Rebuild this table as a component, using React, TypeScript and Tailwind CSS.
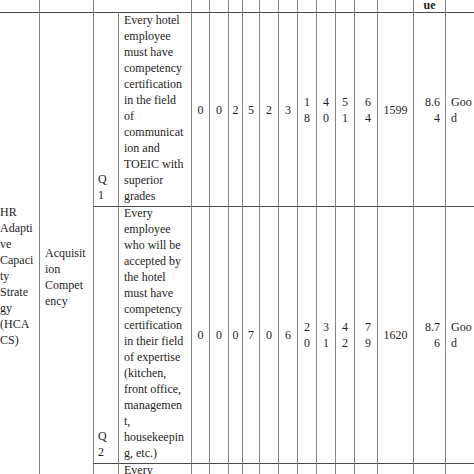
const COLS =
  "grid-cols-[59px_54px_25px_73px_18px_19px_14px_17px_19px_19px_19px_19px_19px_23px_36px_32px_60px]";

const cell = "border-l border-t border-l-[#858585] border-t-[#4a4a4a] bg-white";

type Row = {
  label: string;
  text: string[];
  shift: string;
  scores: string[];
  total: string;
  mean: string[];
  grade: string[];
};

const rows: Row[] = [
  {
    label: "1",
    shift: "-mt-px",
    text: [
      "Every hotel",
      "employee",
      "must have",
      "competency",
      "certification",
      "in the field",
      "of",
      "communicat",
      "ion and",
      "TOEIC with",
      "superior",
      "grades",
    ],
    scores: ["0", "0", "2", "5", "2", "3", "1\n8", "4\n0", "5\n1", "6\n4"],
    total: "1599",
    mean: ["8.6", "4"],
    grade: ["Goo", "d"],
  },
  {
    label: "2",
    shift: "-mt-[2px]",
    text: [
      "Every",
      "employee",
      "who will be",
      "accepted by",
      "the hotel",
      "must have",
      "competency",
      "certification",
      "in their field",
      "of expertise",
      "(kitchen,",
      "front office,",
      "managemen",
      "t,",
      "housekeepin",
      "g, etc.)",
    ],
    scores: ["0", "0", "0", "7", "0", "6", "2\n0", "3\n1", "4\n2", "7\n9"],
    total: "1620",
    mean: ["8.7", "6"],
    grade: ["Goo", "d"],
  },
];

function Lines({ lines }: { lines: string[] }) {
  return (
    <>
      {lines.map((l, i) => (
        <div key={i} className="whitespace-nowrap">
          {l}
        </div>
      ))}
    </>
  );
}

export default function App() {
  return (
    <div
      className="h-[474px] w-[474px] overflow-hidden bg-white text-[12px] leading-4 text-[#1e1e1e]"
      style={{ fontFamily: '"Liberation Serif", "Times New Roman", serif' }}
    >
      <div className={`-ml-[20px] -mt-[8px] grid w-max ${COLS} grid-rows-[20px_194px_257px_60px]`}>
        {/* header row (mostly cropped) */}
        <div className={cell} />
        <div className={cell} />
        <div className={`${cell} col-span-2`} />
        {Array.from({ length: 11 }).map((_, i) => (
          <div key={i} className={cell} />
        ))}
        <div className={`${cell} flex justify-center pt-[4px] font-bold`}>ue</div>
        <div className={cell} />

        {/* spanning dimension cells */}
        <div className={`${cell} row-span-3 pl-[19px] pt-[191px]`}>
          <Lines lines={["HR", "Adapti", "ve", "Capaci", "ty", "Strate", "gy", "(HCA", "CS)"]} />
        </div>
        <div className={`${cell} row-span-3 pl-[5px] pt-[232px]`}>
          <Lines lines={["Acquisit", "ion", "Compet", "ency"]} />
        </div>

        {rows.map((r) => (
          <div key={r.label} className="contents">
            <div className={`${cell} flex flex-col justify-end pb-[3px] pl-[4px]`}>
              <div>Q</div>
              <div>{r.label}</div>
            </div>
            <div className={`${cell} pl-[5px]`}>
              <div className={r.shift}>
                <Lines lines={r.text} />
              </div>
            </div>
            {r.scores.map((s, i) => (
              <div
                key={i}
                className={`${cell} flex flex-col items-center justify-center ${
                  i === 9 ? "items-end pr-[6px]" : ""
                }`}
              >
                <Lines lines={s.split("\n")} />
              </div>
            ))}
            <div className={`${cell} flex items-center justify-center`}>{r.total}</div>
            <div className={`${cell} flex flex-col items-end justify-center pr-[5px]`}>
              <Lines lines={r.mean} />
            </div>
            <div className={`${cell} flex flex-col justify-center pl-[5px]`}>
              <Lines lines={r.grade} />
            </div>
          </div>
        ))}

        {/* next row, cut off at the bottom */}
        <div className={cell} />
        <div className={`${cell} pl-[5px]`}>
          <div className="-mt-[2px]">Every</div>
        </div>
        {Array.from({ length: 13 }).map((_, i) => (
          <div key={i} className={cell} />
        ))}
      </div>
    </div>
  );
}
